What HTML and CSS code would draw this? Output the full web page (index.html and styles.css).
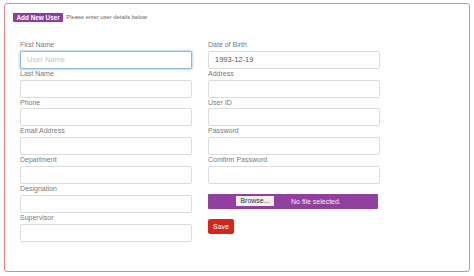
FILE: index.html
```html
<!DOCTYPE html>
<html>
<head>
<meta charset="utf-8">
<link rel="stylesheet" href="styles.css">
</head>
<body>
<div class="panel">
  <div class="head">
    <span class="badge">Add New User</span>
    <span class="hint">Please enter user details below</span>
  </div>
  <div class="cols">
    <div class="col">
      <div class="field"><label>First Name</label><input class="inp focus" placeholder="User Name"></div>
      <div class="field"><label>Last Name</label><input class="inp"></div>
      <div class="field"><label>Phone</label><input class="inp"></div>
      <div class="field"><label>Email Address</label><input class="inp"></div>
      <div class="field"><label>Department</label><input class="inp"></div>
      <div class="field"><label>Designation</label><input class="inp"></div>
      <div class="field"><label>Supervisor</label><input class="inp"></div>
    </div>
    <div class="col">
      <div class="field"><label>Date of Birth</label><input class="inp" value="1993-12-19"></div>
      <div class="field"><label>Address</label><input class="inp"></div>
      <div class="field"><label>User ID</label><input class="inp"></div>
      <div class="field"><label>Password</label><input class="inp"></div>
      <div class="field"><label>Comfirm Password</label><input class="inp"></div>
      <div class="filebar"><span class="browse">Browse...</span><span class="nofile">No file selected.</span></div>
      <div><span class="save">Save</span></div>
    </div>
  </div>
</div>
</body>
</html>
```
FILE: styles.css
```css
* { box-sizing: border-box; }
html, body { margin: 0; padding: 0; background: #fff; }
body { font-family: "Liberation Sans", Arial, sans-serif; }
.panel {
  margin: 3px 0 0 4px;
  width: 466px;
  height: 269px;
  border: 1px solid #e58a8a;
  border-radius: 3px;
  padding: 8.5px 0 0 8px;
}
.head { display: flex; align-items: center; gap: 3px; height: 9px; }
.badge {
  background: #8d3c9f;
  color: #fff;
  font-weight: bold;
  font-size: 6.4px;
  padding: 0 3.5px;
  height: 9px;
  line-height: 9px;
  border-radius: 1px;
}
.hint { font-size: 5.8px; color: #666; }
.cols { display: flex; gap: 16px; margin: 18.5px 0 0 7px; }
.col { width: 172px; display: flex; flex-direction: column; }
.field { display: flex; flex-direction: column; }
.field label {
  font-size: 7px;
  color: #7a7a7a;
  height: 10.8px;
  line-height: 10px;
}
.inp {
  height: 18px;
  width: 172px;
  margin: 0;
  border: 1px solid #dcdcdc;
  border-radius: 2px;
  font-family: "Liberation Sans", Arial, sans-serif;
  font-size: 7.5px;
  color: #555;
  padding: 0 6px;
  outline: none;
  background: #fff;
}
.inp::placeholder { color: #c4c4c4; }
.inp.focus {
  border-color: #8fb8dc;
  box-shadow: 0 0 2px 1px rgba(110, 170, 220, 0.45);
}
.filebar {
  margin-top: 10px;
  width: 170px;
  height: 15px;
  background: #92409f;
  display: flex;
  align-items: center;
  padding-left: 28px;
  border-radius: 1px;
}
.browse {
  background: #f0f0f0;
  color: #333;
  font-size: 7px;
  width: 38px;
  height: 10px;
  line-height: 10px;
  text-align: center;
}
.nofile { color: #eee; font-size: 7px; margin-left: 17px; }
.save {
  display: inline-block;
  margin-top: 10px;
  background: #d8241b;
  color: #fff;
  font-size: 7px;
  width: 26px;
  height: 15px;
  line-height: 15px;
  text-align: center;
  border-radius: 2px;
}
```
